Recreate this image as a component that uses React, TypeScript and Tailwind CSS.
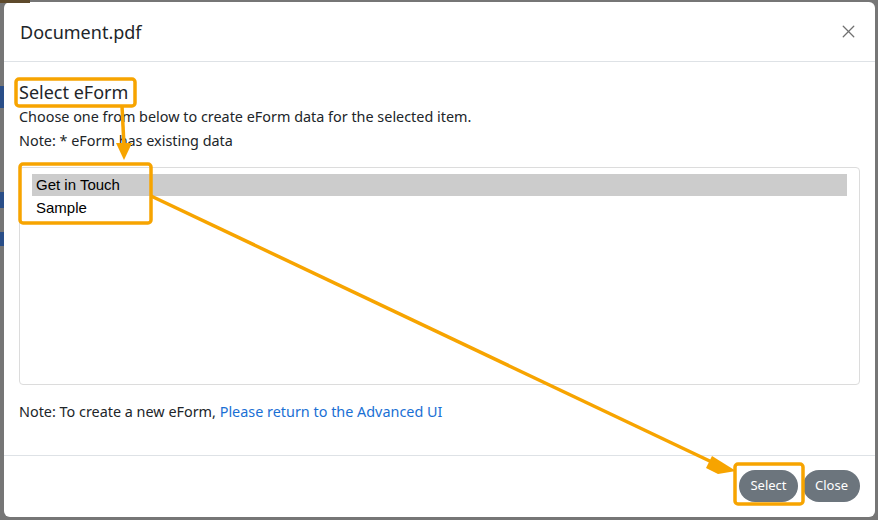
import { X } from "lucide-react";

const font = { fontFamily: '"Segoe UI", "Noto Sans", "Open Sans", sans-serif' };

function Annotations() {
  return (
    <svg className="pointer-events-none absolute inset-0" width="878" height="520" viewBox="0 0 878 520">
      <g fill="none" stroke="#f7a400" strokeWidth="3.5">
        <rect x="16" y="79" width="119" height="27" rx="3" />
        <rect x="20" y="164" width="131" height="59" rx="3" />
        <rect x="735" y="464" width="68" height="40" rx="3" />
        <line x1="122" y1="106" x2="124" y2="146" />
        <line x1="151" y1="196" x2="716" y2="464" />
      </g>
      <g fill="#f7a400">
        <polygon points="116,143 132,143 124,160" />
        <polygon points="712,456 736,471 718,474 706,468" />
      </g>
    </svg>
  );
}

export default function App() {
  return (
    <div className="relative h-[520px] w-[878px] overflow-hidden bg-[#767676]" style={font}>
      <div className="absolute left-0 top-0 h-[3px] w-[30px] bg-[#5e4a2c]" />
      <div className="absolute left-0 top-[86px] h-[22px] w-[4px] bg-[#2a4e88]" />
      <div className="absolute left-0 top-[192px] h-[16px] w-[4px] bg-[#2a4e88]" />
      <div className="absolute left-0 top-[232px] h-[14px] w-[4px] bg-[#2a4e88]" />

      <div className="ml-[4px] mt-[2px] flex h-[515px] w-[871px] flex-col rounded-[6px] bg-white text-[#212529]">
        <div className="flex h-[60px] items-center justify-between border-b border-[#dee2e6] pl-[16px] pr-[16px]">
          <h1 className="text-[18px] leading-none">Document.pdf</h1>
          <X className="h-[21px] w-[21px] text-[#707070]" strokeWidth={1.5} />
        </div>

        <div className="flex flex-1 flex-col px-[15px] pt-[18px]">
          <h2 className="text-[18px] leading-[24px]">Select eForm</h2>
          <p className="mt-[1px] text-[14.4px] leading-[24px]">Choose one from below to create eForm data for the selected item.</p>
          <p className="text-[14.4px] leading-[24px]">Note: * eForm has existing data</p>

          <div
            className="mt-[14px] h-[218px] rounded-[4px] border border-[#dcdcdc] px-[12px] py-[6px] text-[15px] text-black"
            style={{ fontFamily: '"Liberation Sans", Arial, sans-serif' }}
          >
            <div className="h-[22px] bg-[#cccccc] pl-[4px] leading-[22px]">Get in Touch</div>
            <div className="h-[22px] pl-[4px] leading-[24px]">Sample</div>
          </div>

          <p className="mt-[17px] text-[14.4px] leading-[20px]">
            Note: To create a new eForm, <span className="text-[#1a6fd4]">Please return to the Advanced UI</span>
          </p>
        </div>

        <div className="flex h-[62px] items-center justify-end gap-[5px] border-t border-[#dee2e6] pb-[2px] pr-[15px]">
          <button className="h-[32px] w-[59px] rounded-full bg-[#6c757d] text-[13px] text-white">Select</button>
          <button className="h-[32px] w-[57px] rounded-full bg-[#6c757d] text-[13px] text-white">Close</button>
        </div>
      </div>

      <Annotations />
    </div>
  );
}
